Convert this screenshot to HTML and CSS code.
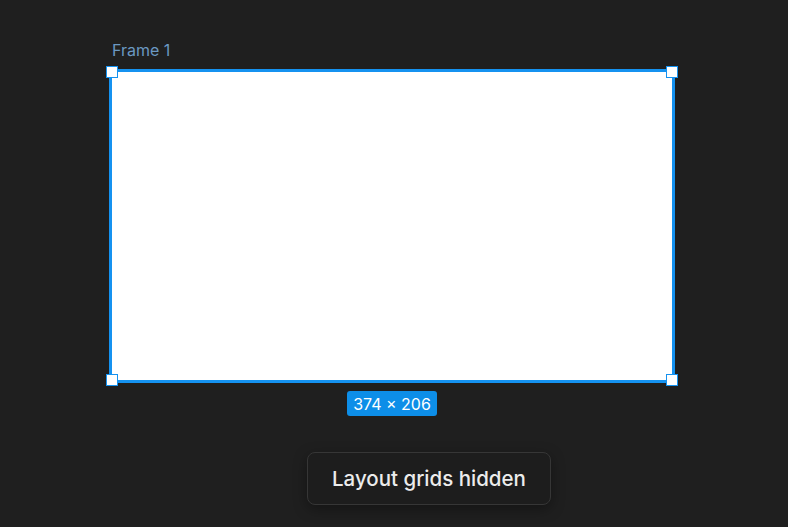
FILE: index.html
```html
<!DOCTYPE html>
<html>
<head>
<meta charset="utf-8">
<link rel="stylesheet" href="styles.css">
</head>
<body>
<div class="canvas">
  <div class="frame-col">
    <div class="frame-label">Frame 1</div>
    <div class="frame-wrap">
      <div class="frame"></div>
      <span class="handle tl"></span>
      <span class="handle tr"></span>
      <span class="handle bl"></span>
      <span class="handle br"></span>
    </div>
    <div class="badge-row"><span class="badge">374 × 206</span></div>
  </div>
  <div class="toast">Layout grids hidden</div>
</div>
</body>
</html>
```
FILE: styles.css
```css
html, body {
  margin: 0;
  padding: 0;
  background: #1f1f1f;
  width: 788px;
  height: 527px;
  overflow: hidden;
  font-family: Inter, "Noto Sans", sans-serif;
}
.canvas {
  display: flex;
  flex-direction: column;
  padding: 42px 0 0 109px;
}
.frame-col {
  display: flex;
  flex-direction: column;
  width: 566px;
}
.frame-label {
  font-size: 16px;
  line-height: 17px;
  color: #6b98c2;
  padding-left: 3px;
  margin-bottom: 10px;
}
.frame-wrap {
  position: relative;
  width: 566px;
  height: 314px;
}
.frame {
  box-sizing: border-box;
  width: 100%;
  height: 100%;
  background: #ffffff;
  border: 3px solid #1592f0;
}
.handle {
  position: absolute;
  box-sizing: border-box;
  width: 12px;
  height: 12px;
  background: #ffffff;
  border: 1px solid #1592f0;
}
.tl { left: -3px; top: -3px; }
.tr { right: -3px; top: -3px; }
.bl { left: -3px; bottom: -3px; }
.br { right: -3px; bottom: -3px; }
.badge-row {
  display: flex;
  justify-content: center;
  margin-top: 8px;
}
.badge {
  display: inline-flex;
  align-items: center;
  height: 25px;
  padding: 0 6px;
  border-radius: 3px;
  background: #0d8ee8;
  color: #ffffff;
  font-size: 16px;
}
.toast {
  align-self: flex-start;
  box-sizing: border-box;
  margin: 36px 0 0 198px;
  height: 53px;
  padding: 0 24px;
  display: flex;
  align-items: center;
  border-radius: 8px;
  background: #1d1d1d;
  border: 1px solid #363636;
  box-shadow: 0 4px 14px rgba(0,0,0,0.35);
  color: #ececec;
  font-size: 20.5px;
  font-weight: 500;
}
```
